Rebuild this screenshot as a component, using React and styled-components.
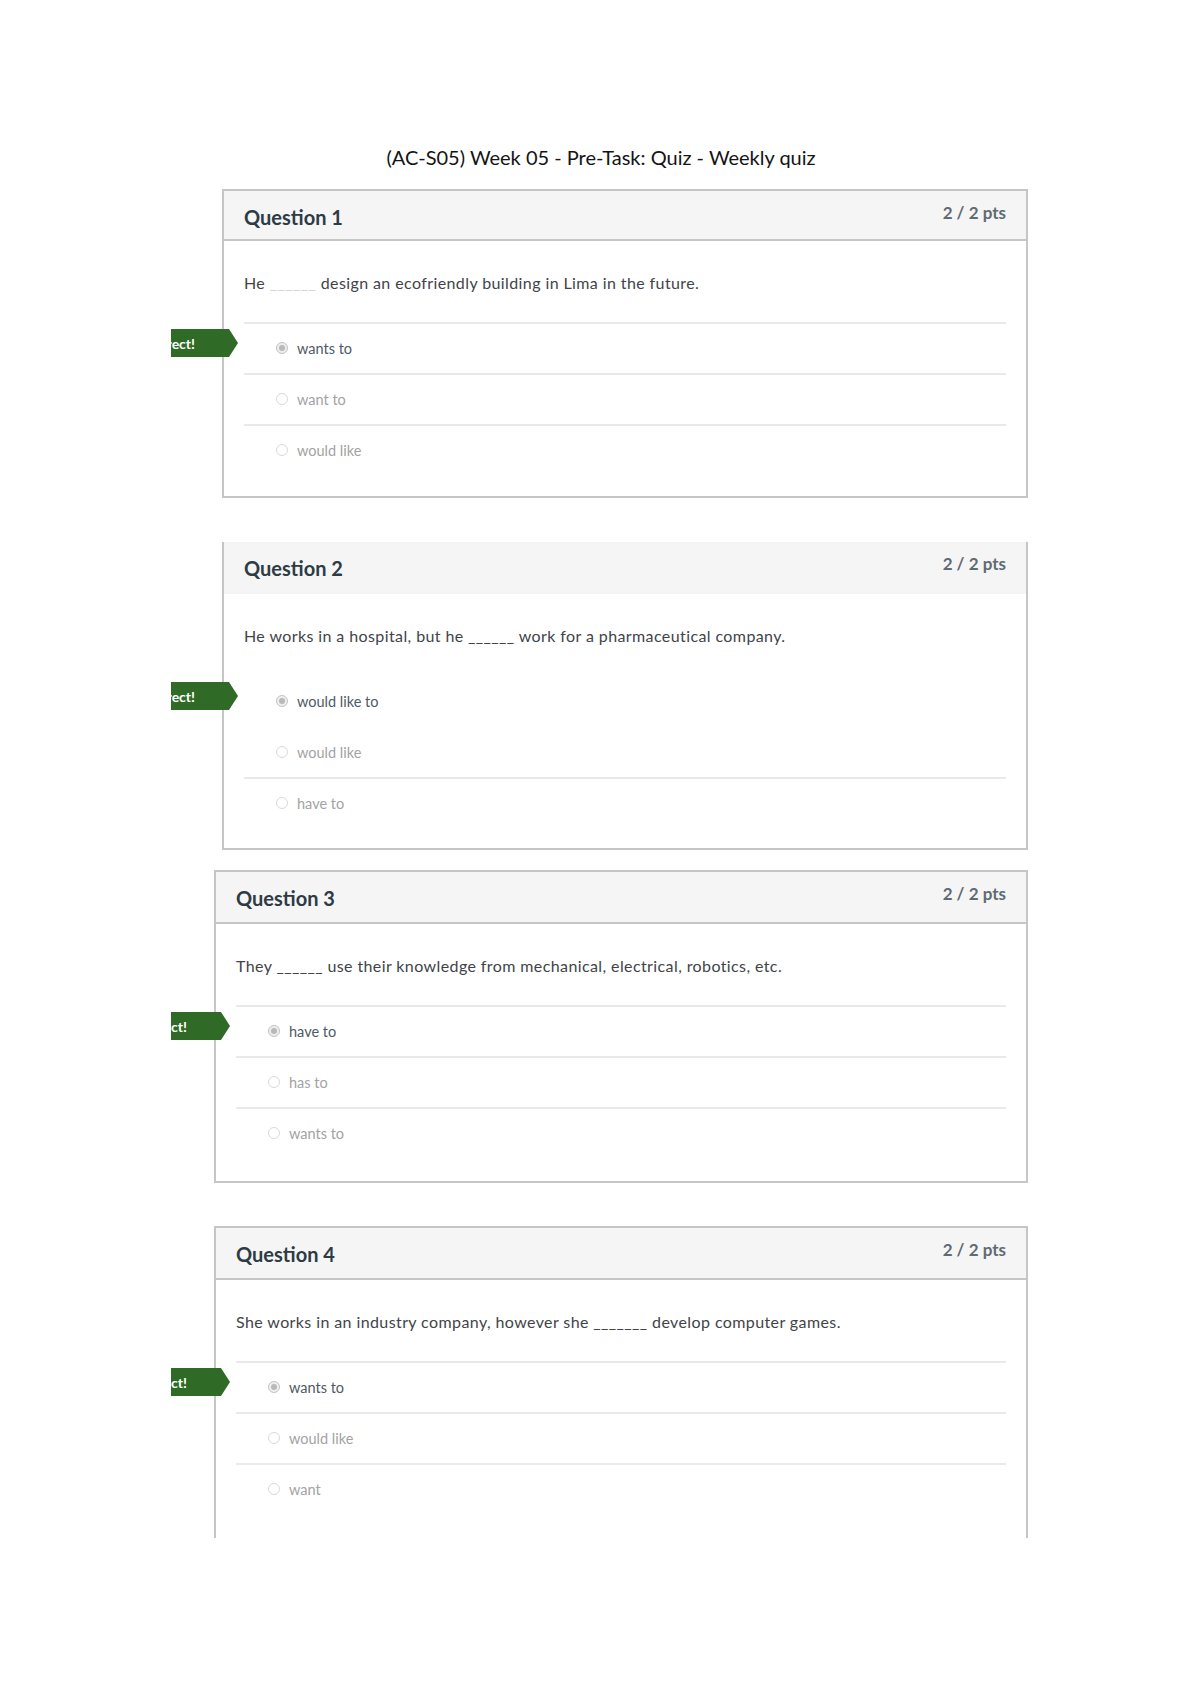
import React from "react";
import styled, { createGlobalStyle } from "styled-components";

const Global = createGlobalStyle`
  html, body { margin: 0; padding: 0; background: #ffffff; }
  body { font-family: Lato, "Open Sans", Arial, sans-serif; }
`;

const Page = styled.div`
  width: 1200px;
  min-height: 1698px;
  padding-top: 145px;
  box-sizing: border-box;
  background: #fff;
`;

const Title = styled.h1`
  margin: 0;
  text-align: center;
  font-family: Lato, "Liberation Sans", sans-serif;
  font-weight: 400;
  font-size: 20px;
  line-height: 24px;
  color: #141414;
  padding-left: 2px;
`;

const Sheet = styled.div`
  margin-left: 171px;
  width: 857px;
  overflow: hidden;
  padding-top: 20px;
  padding-bottom: 160px;
`;

const Card = styled.section`
  margin-left: ${(p) => p.$indent}px;
  margin-top: ${(p) => p.$gap}px;
  border: 2px solid #c6c6c6;
  ${(p) => (p.$noTop ? "border-top-width: 0;" : "")}
  ${(p) => (p.$noBottom ? "border-bottom-width: 0;" : "")}
  background: #fff;
`;

const Header = styled.header`
  display: flex;
  justify-content: space-between;
  align-items: flex-start;
  height: ${(p) => p.$h}px;
  box-sizing: border-box;
  padding: 14px 20px 0 20px;
  background: #f5f5f5;
  border-bottom: ${(p) => (p.$plain ? "none" : "2px solid #c6c6c6")};
`;

const QTitle = styled.h2`
  margin: 0;
  font-family: Lato, sans-serif;
  font-weight: 700;
  font-size: 20px;
  line-height: 24px;
  color: #2d3b45;
`;

const Points = styled.span`
  margin-top: -2px;
  font-family: Lato, sans-serif;
  font-weight: 700;
  font-size: 17px;
  line-height: 20px;
  color: #5f6a72;
`;

const Body = styled.div`
  padding: 32px 20px ${(p) => p.$bottom}px 20px;
`;

const QText = styled.p`
  margin: 0 0 29px 0;
  font-family: Lato, sans-serif;
  font-size: 16px;
  letter-spacing: 0.4px;
  line-height: 20px;
  color: #3f4449;
`;

const Blank = styled.span`
  color: ${(p) => (p.$light ? "#d6d6d6" : "#3f4449")};
`;

const Answers = styled.div`
  display: flex;
  flex-direction: column;
`;

const Row = styled.div`
  position: relative;
  display: flex;
  align-items: center;
  gap: 9px;
  height: 51px;
  box-sizing: border-box;
  padding-left: 32px;
  border-top: 2px solid ${(p) => (p.$line ? "#e9e9e9" : "transparent")};
`;

const Radio = styled.span`
  position: relative;
  width: 12px;
  height: 12px;
  border-radius: 50%;
  box-sizing: border-box;
  border: 1px solid ${(p) => (p.$checked ? "#c4c4c4" : "#dadada")};
  background: ${(p) => (p.$checked ? "#eeeeee" : "#fff")};
  margin-top: -2px;
  flex: none;
  &::after {
    content: "";
    display: ${(p) => (p.$checked ? "block" : "none")};
    position: absolute;
    left: 2px;
    top: 2px;
    width: 6px;
    height: 6px;
    border-radius: 50%;
    background: #b9b9b9;
  }
`;

const AnswerText = styled.span`
  font-family: Lato, sans-serif;
  font-size: 14.5px;
  line-height: 18px;
  color: ${(p) => (p.$checked ? "#4f5a66" : "#a3a3a3")};
`;

const Badge = styled.div`
  position: absolute;
  right: calc(100% + 6px);
  top: 5px;
  width: 120px;
  height: 28px;
  box-sizing: border-box;
  padding-right: 43px;
  display: flex;
  align-items: center;
  justify-content: flex-end;
  background: #2f6b27;
  clip-path: polygon(0 0, calc(100% - 9px) 0, 100% 50%, calc(100% - 9px) 100%, 0 100%);
  font-family: Lato, sans-serif;
  font-weight: 700;
  font-size: 14px;
  color: #ffffff;
  white-space: nowrap;
`;

const questions = [
  {
    n: 1,
    indent: 51,
    gap: 0,
    headerH: 50,
    bottom: 21,
    pre: "He ",
    blank: "______",
    lightBlank: true,
    post: " design an ecofriendly building in Lima in the future.",
    answers: ["wants to", "want to", "would like"],
    lines: [true, true, true],
  },
  {
    n: 2,
    indent: 51,
    gap: 44,
    headerH: 52,
    bottom: 20,
    plain: true,
    pre: "He works in a hospital, but he ",
    blank: "______",
    post: " work for a pharmaceutical company.",
    answers: ["would like to", "would like", "have to"],
    lines: [false, false, true],
  },
  {
    n: 3,
    indent: 43,
    gap: 20,
    headerH: 52,
    bottom: 23,
    pre: "They ",
    blank: "______",
    post: " use their knowledge from mechanical, electrical, robotics, etc.",
    answers: ["have to", "has to", "wants to"],
    lines: [true, true, true],
  },
  {
    n: 4,
    indent: 43,
    gap: 43,
    headerH: 52,
    bottom: 24,
    noBottom: true,
    pre: "She works in an industry company, however she ",
    blank: "_______",
    post: " develop computer games.",
    answers: ["wants to", "would like", "want"],
    lines: [true, true, true],
  },
];

function Question({ q }) {
  return (
    <Card $indent={q.indent} $gap={q.gap} $noTop={q.plain} $noBottom={q.noBottom}>
      <Header $plain={q.plain} $h={q.headerH}>
        <QTitle>Question {q.n}</QTitle>
        <Points>2 / 2 pts</Points>
      </Header>
      <Body $bottom={q.bottom}>
        <QText>
          {q.pre}
          <Blank $light={q.lightBlank}>{q.blank}</Blank>
          {q.post}
        </QText>
        <Answers>
          {q.answers.map((a, i) => (
            <Row key={a} $line={q.lines[i]}>
              {i === 0 && <Badge>Correct!</Badge>}
              <Radio $checked={i === 0} />
              <AnswerText $checked={i === 0}>{a}</AnswerText>
            </Row>
          ))}
        </Answers>
      </Body>
    </Card>
  );
}

export default function App() {
  return (
    <Page>
      <Global />
      <Title>(AC-S05) Week 05 - Pre-Task: Quiz - Weekly quiz</Title>
      <Sheet>
        {questions.map((q) => (
          <Question key={q.n} q={q} />
        ))}
      </Sheet>
    </Page>
  );
}
